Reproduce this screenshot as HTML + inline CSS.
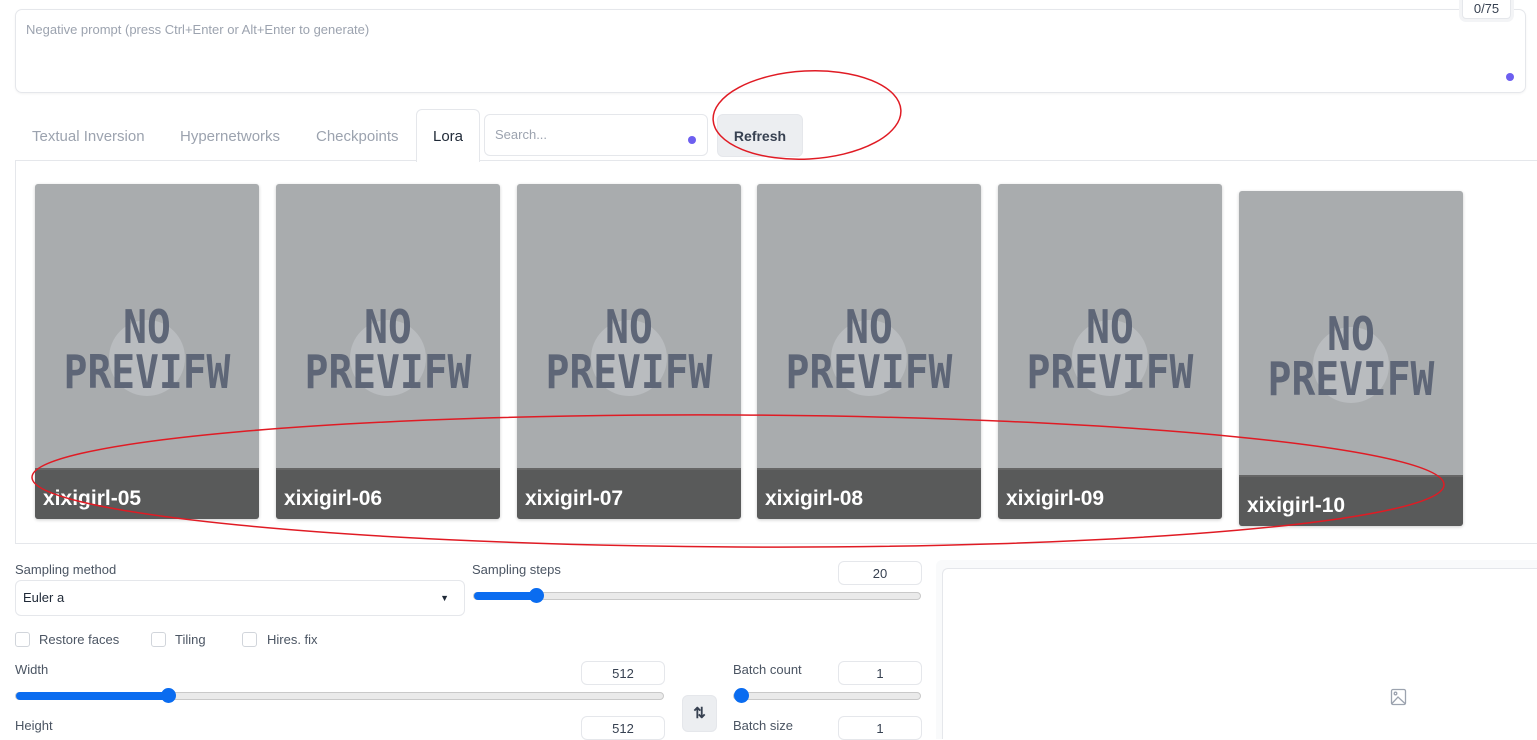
<!DOCTYPE html>
<html><head><meta charset="utf-8"><style>
*{box-sizing:border-box;margin:0;padding:0}
body{width:1537px;height:739px;overflow:hidden;background:#fff;font-family:"Liberation Sans",sans-serif;position:relative;color:#374151}
.a{position:absolute}
.ta{left:15px;top:9px;width:1511px;height:84px;border:1px solid #e5e7eb;border-radius:7px;box-shadow:0 1px 2px rgba(0,0,0,.05)}
.ph{left:26px;top:22px;font-size:13px;color:#9ca3af}
.cnt{left:1462px;top:-4px;width:49px;height:23px;border:1px solid #e5e7eb;border-radius:4px;background:#fff;font-size:13px;text-align:center;line-height:24px;box-shadow:0 0 0 3px #f3f4f6}
.dot{width:8px;height:8px;border-radius:50%;background:#6d5ff0}
.tab{top:128px;font-size:15px;color:#9ca3af}
.card{width:224px;height:335px;background:#a9acae;border-radius:3px;overflow:hidden;box-shadow:0 1px 3px rgba(0,0,0,.2)}
.card .c{position:absolute;left:74px;top:136px;width:76px;height:76px;border-radius:50%;background:#b9bcbf}
.card .t{position:absolute;left:0;right:0;text-align:center;font-family:"DejaVu Sans Mono","Liberation Mono",monospace;font-weight:bold;color:#5e6677;font-size:46px;line-height:46px;transform:scaleX(.86)}
.card .bar{position:absolute;left:0;right:0;bottom:0;height:51px;background:#595a5a;border-top:2px solid #666}
.card .bar b{position:absolute;left:8px;bottom:8px;color:#fff;font-size:21px;font-weight:bold}
.lbl{font-size:13px;color:#4b5563}
.num{width:84px;height:24px;border:1px solid #e5e7eb;border-radius:6px;font-size:13px;text-align:center;line-height:23px;color:#374151}
.trk{height:8px;border:1px solid #c9c9c9;border-radius:4px;background:#eaeaea;overflow:visible}
.trk i{position:absolute;left:0;top:-1px;height:8px;background:#0a6cf0;border-radius:4px}
.trk u{position:absolute;top:-5px;width:15px;height:15px;border-radius:50%;background:#0a6cf0}
.cb{width:15px;height:15px;border:1px solid #d1d5db;border-radius:3px}
</style></head><body>
<div class="a ta"></div>
<div class="a ph">Negative prompt (press Ctrl+Enter or Alt+Enter to generate)</div>
<div class="a cnt">0/75</div>
<div class="a dot" style="left:1506px;top:73px"></div>

<div class="a" style="left:15px;top:160px;width:1522px;height:384px;border:1px solid #e5e7eb;border-right:none"></div>
<div class="a tab" style="left:32px">Textual Inversion</div>
<div class="a tab" style="left:180px">Hypernetworks</div>
<div class="a tab" style="left:316px">Checkpoints</div>
<div class="a" style="left:416px;top:109px;width:64px;height:53px;border:1px solid #e5e7eb;border-bottom:none;border-radius:6px 6px 0 0;background:#fff"></div>
<div class="a tab" style="left:433px;color:#1f2937">Lora</div>
<div class="a" style="left:484px;top:114px;width:224px;height:42px;border:1px solid #e5e7eb;border-radius:6px"></div>
<div class="a" style="left:495px;top:127px;font-size:13px;color:#9ca3af">Search...</div>
<div class="a dot" style="left:688px;top:136px"></div>
<div class="a" style="left:717px;top:114px;width:86px;height:43px;background:#eceef1;border-radius:6px;border:1px solid #e5e7eb;font-size:14px;font-weight:bold;color:#374151;text-align:center;line-height:42px">Refresh</div>

<div class="a card" style="left:35px;top:184px"><div class="c"></div><div class="t" style="top:120px">NO</div><div class="t" style="top:165px">PREVIFW</div><div class="bar"><b>xixigirl-05</b></div></div>
<div class="a card" style="left:276px;top:184px"><div class="c"></div><div class="t" style="top:120px">NO</div><div class="t" style="top:165px">PREVIFW</div><div class="bar"><b>xixigirl-06</b></div></div>
<div class="a card" style="left:517px;top:184px"><div class="c"></div><div class="t" style="top:120px">NO</div><div class="t" style="top:165px">PREVIFW</div><div class="bar"><b>xixigirl-07</b></div></div>
<div class="a card" style="left:757px;top:184px"><div class="c"></div><div class="t" style="top:120px">NO</div><div class="t" style="top:165px">PREVIFW</div><div class="bar"><b>xixigirl-08</b></div></div>
<div class="a card" style="left:998px;top:184px"><div class="c"></div><div class="t" style="top:120px">NO</div><div class="t" style="top:165px">PREVIFW</div><div class="bar"><b>xixigirl-09</b></div></div>
<div class="a card" style="left:1239px;top:191px"><div class="c"></div><div class="t" style="top:120px">NO</div><div class="t" style="top:165px">PREVIFW</div><div class="bar"><b>xixigirl-10</b></div></div>

<div class="a lbl" style="left:15px;top:562px">Sampling method</div>
<div class="a" style="left:15px;top:580px;width:450px;height:36px;border:1px solid #e5e7eb;border-radius:6px;font-size:13px;line-height:34px;padding-left:7px;color:#1f2937">Euler a<span style="position:absolute;right:15px;font-size:9px">▼</span></div>
<div class="a lbl" style="left:472px;top:562px">Sampling steps</div>
<div class="a num" style="left:838px;top:561px">20</div>
<div class="a trk" style="left:473px;top:592px;width:448px"><i style="width:62px"></i><u style="left:55px"></u></div>

<div class="a cb" style="left:15px;top:632px"></div><div class="a lbl" style="left:39px;top:632px">Restore faces</div>
<div class="a cb" style="left:151px;top:632px"></div><div class="a lbl" style="left:175px;top:632px">Tiling</div>
<div class="a cb" style="left:242px;top:632px"></div><div class="a lbl" style="left:267px;top:632px">Hires. fix</div>

<div class="a lbl" style="left:15px;top:662px">Width</div>
<div class="a num" style="left:581px;top:661px">512</div>
<div class="a trk" style="left:15px;top:692px;width:649px"><i style="width:153px"></i><u style="left:145px"></u></div>
<div class="a lbl" style="left:15px;top:718px">Height</div>
<div class="a num" style="left:581px;top:716px">512</div>
<div class="a" style="left:682px;top:695px;width:35px;height:37px;background:#eceef1;border-radius:6px;border:1px solid #e5e7eb;text-align:center;line-height:35px;font-size:15px;font-weight:bold">⇅</div>
<div class="a lbl" style="left:733px;top:662px">Batch count</div>
<div class="a num" style="left:838px;top:661px">1</div>
<div class="a trk" style="left:733px;top:692px;width:188px"><u style="left:0px"></u></div>
<div class="a lbl" style="left:733px;top:718px">Batch size</div>
<div class="a num" style="left:838px;top:716px">1</div>

<div class="a" style="left:936px;top:560px;width:601px;height:179px;background:#f9fafb;border-radius:6px 0 0 0"></div>
<div class="a" style="left:942px;top:568px;width:595px;height:171px;background:#fff;border:1px solid #e5e7eb;border-right:none;border-bottom:none;border-radius:6px 0 0 0"></div>
<svg class="a" style="left:1390px;top:688px" width="18" height="18" viewBox="0 0 18 18" fill="none" stroke="#9ca3af" stroke-width="1.3"><rect x="1.5" y="1.5" width="14" height="15" rx="1.5"/><circle cx="5.5" cy="5.5" r="1.3"/><path d="M1.5 16 L8 9 L15.5 16"/></svg>

<svg class="a" style="left:0;top:0" width="1537" height="739"><g fill="none" stroke="#e01b24" stroke-width="1.5">
<ellipse cx="807" cy="115" rx="94" ry="44" transform="rotate(-3 807 115)"/>
<ellipse cx="738" cy="481" rx="706" ry="66" transform="rotate(0.3 738 481)"/></g></svg>
</body></html>
